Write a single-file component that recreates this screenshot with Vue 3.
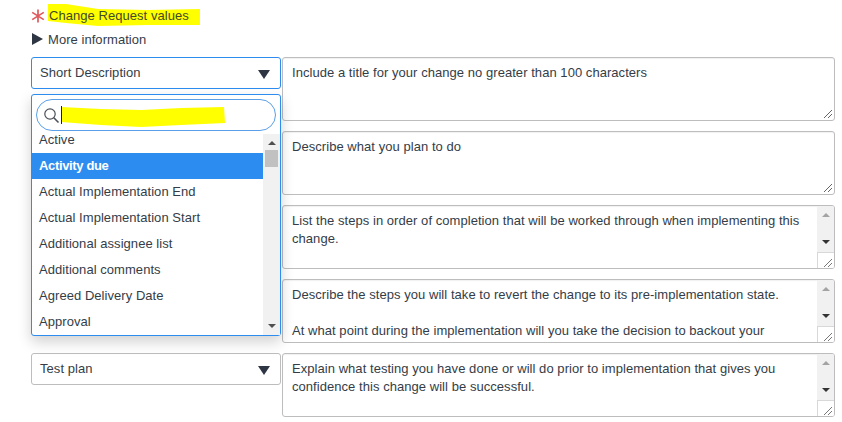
<script setup>
  const fieldOptions = [
    { name: 'Active' },
    { name: 'Activity due', selected: true },
    { name: 'Actual Implementation End' },
    { name: 'Actual Implementation Start' },
    { name: 'Additional assignee list' },
    { name: 'Additional comments' },
    { name: 'Agreed Delivery Date' },
    { name: 'Approval' },
  ];

  const rows = [
    { id: 1, label: 'Short Description', open: true, text: ['Include a title for your change no greater than 100 characters'] },
    { id: 2, text: ['Describe what you plan to do'] },
    { id: 3, scroll: true, text: ['List the steps in order of completion that will be worked through when implementing this change.'] },
    { id: 4, scroll: true, text: ['Describe the steps you will take to revert the change to its pre-implementation state.', '', 'At what point during the implementation will you take the decision to backout your change?'] },
    { id: 5, label: 'Test plan', scroll: true, text: ['Explain what testing you have done or will do prior to implementation that gives you confidence this change will be successful.'] },
  ];
</script>

<template>
  <div class="page">
    <div class="title">
      <svg class="star" width="14" height="14" viewBox="0 0 14 14">
        <path d="M7 0.5V13.5M1.2 3.4L12.8 10.6M12.8 3.4L1.2 10.6" stroke="#de5a5f" stroke-width="1.7" fill="none" />
      </svg>
      <span class="marked">
        <svg class="markedBg" width="153" height="22" viewBox="0 0 153 22">
          <path d="M0 0L18 0L50 5L100 6L152 5L152 21L100 21L50 22L18 19L0 17Z" fill="#ffff00" />
        </svg>
        <span class="markedText">Change Request values</span>
      </span>
    </div>

    <div class="more">
      <span class="moreArrow"></span>
      <span>More information</span>
    </div>

    <div class="rows">
      <div v-for="row in rows" :key="row.id" class="row">
        <div class="left">
          <template v-if="row.label">
            <div class="select" :class="{ selectOpen: row.open }">
              <span>{{ row.label }}</span>
              <span class="selectArrow"></span>
            </div>
          </template>

          <div v-if="row.open" class="dropdown">
            <div class="search">
              <svg class="glass" width="17" height="17" viewBox="0 0 17 17">
                <circle cx="7" cy="7" r="5.2" stroke="#4a5058" stroke-width="1.2" fill="none" />
                <path d="M10.8 10.8L15.5 15.5" stroke="#4a5058" stroke-width="1.6" fill="none" />
              </svg>
              <span class="caret"></span>
              <svg class="scribble" width="165" height="22" viewBox="0 0 165 22">
                <path d="M0 1L40 3L80 4L120 2L163 1L164 17L120 19L80 21L40 19L0 16Z" fill="#ffff00" />
              </svg>
            </div>
            <div class="listWrap">
              <div class="list">
                <div
                  v-for="option in fieldOptions"
                  :key="option.name"
                  class="option"
                  :class="{ optionSelected: option.selected }"
                >{{ option.name }}</div>
              </div>
              <div class="listBar">
                <span class="barUp"></span>
                <span class="barThumb"></span>
                <span class="barDown"></span>
              </div>
            </div>
          </div>
        </div>

        <div class="area" :class="{ areaScroll: row.scroll }">
          <div class="areaText">
            <div v-for="(line, i) in row.text" :key="i" class="areaLine">{{ line }}</div>
          </div>
          <div v-if="row.scroll" class="areaBar">
            <span class="barUp barUpOff"></span>
            <span class="barDown barDownDark"></span>
            <span class="spacer"></span>
            <span class="resizer">
              <svg width="16" height="16" viewBox="0 0 16 16">
                <path d="M6 14L14 6M10 14L14 10" stroke="#777" stroke-width="1" fill="none" />
              </svg>
            </span>
          </div>
          <svg v-else class="grip" width="10" height="10" viewBox="0 0 10 10">
            <path d="M1 9L9 1M5 9L9 5" stroke="#666" stroke-width="1" fill="none" />
          </svg>
        </div>
      </div>
    </div>
  </div>
</template>

<style scoped>
  .page {
    width: 842px;
    height: 422px;
    box-sizing: border-box;
    padding: 5px 7px 0 31px;
    font-family: "Liberation Sans", Arial, sans-serif;
    font-size: 13px;
    letter-spacing: 0.05px;
    color: #343d47;
    background: #fff;
    overflow: hidden;
  }

  .title {
    display: flex;
    align-items: center;
    height: 22px;
  }

  .star {
    margin: -1px 3px 0 0;
  }

  .marked {
    position: relative;
    display: block;
    width: 153px;
    height: 22px;
    line-height: 21px;
  }

  .markedBg {
    position: absolute;
    left: 0;
    top: 0;
    margin-top: -1px;
  }

  .markedText {
    position: relative;
    padding-left: 1px;
    color: #3f4a2a;
  }

  .more {
    display: flex;
    align-items: center;
    height: 22px;
    margin-top: 1px;
  }

  .moreArrow {
    width: 0;
    height: 0;
    margin: 0 5px 0 1px;
    border-left: 11px solid #2e3644;
    border-top: 6px solid transparent;
    border-bottom: 6px solid transparent;
  }

  .rows {
    display: flex;
    flex-direction: column;
    gap: 10px;
    margin-top: 7px;
  }

  .row {
    display: flex;
    gap: 1px;
    height: 64px;
  }

  .left {
    position: relative;
    width: 250px;
    flex: none;
  }

  .select {
    display: flex;
    align-items: center;
    justify-content: space-between;
    box-sizing: border-box;
    height: 32px;
    padding: 0 10px 2px 8px;
    border: 1px solid #bdbdbd;
    border-radius: 3px;
  }

  .selectOpen {
    border-color: #2d8cf0;
  }

  .selectArrow {
    width: 0;
    height: 0;
    margin-top: 5px;
    border-top: 9px solid #2e3644;
    border-left: 6px solid transparent;
    border-right: 6px solid transparent;
  }

  .dropdown {
    position: absolute;
    z-index: 2;
    top: 37px;
    left: 0;
    width: 250px;
    height: 242px;
    box-sizing: border-box;
    border: 1px solid #2d8cf0;
    border-radius: 3px;
    background: #fff;
    box-shadow: 0 6px 14px rgba(0, 0, 0, 0.18);
    display: flex;
    flex-direction: column;
  }

  .search {
    position: relative;
    display: flex;
    align-items: center;
    box-sizing: border-box;
    height: 32px;
    margin: 4px 4px 3px;
    padding-left: 6px;
    border: 1px solid #5a9fe8;
    border-radius: 16px;
  }

  .glass {
    flex: none;
  }

  .caret {
    width: 1px;
    height: 18px;
    margin-left: 1px;
    background: #222;
    position: relative;
    z-index: 1;
  }

  .scribble {
    position: absolute;
    left: 24px;
    top: 6px;
  }

  .listWrap {
    flex: 1;
    display: flex;
    min-height: 0;
  }

  .list {
    flex: 1;
    overflow: hidden;
  }

  .option {
    height: 26px;
    line-height: 25px;
    padding-left: 7px;
  }

  .option:first-child {
    height: 19px;
    line-height: 11px;
  }

  .optionSelected {
    background: #2d8cf0;
    color: #fff;
    font-weight: 700;
    letter-spacing: -0.35px;
  }

  .listBar {
    width: 17px;
    flex: none;
    display: flex;
    flex-direction: column;
    align-items: center;
    background: #f1f1f1;
  }

  .barUp {
    width: 0;
    height: 0;
    margin-top: 7px;
    border-bottom: 4px solid #505050;
    border-left: 4px solid transparent;
    border-right: 4px solid transparent;
  }

  .barThumb {
    width: 13px;
    height: 17px;
    margin-top: 5px;
    background: #c1c1c1;
  }

  .barDown {
    width: 0;
    height: 0;
    margin-top: auto;
    margin-bottom: 7px;
    border-top: 4px solid #505050;
    border-left: 4px solid transparent;
    border-right: 4px solid transparent;
  }

  .area {
    position: relative;
    flex: 1;
    display: flex;
    overflow: hidden;
    box-sizing: border-box;
    border: 1px solid #bdbdbd;
    border-radius: 3px;
    box-shadow: inset 0 1px 1px rgba(0, 0, 0, 0.06);
  }

  .areaText {
    flex: 1;
    min-width: 0;
    padding: 6px 9px 0;
    line-height: 18px;
    overflow: hidden;
  }

  .areaLine {
    min-height: 18px;
  }

  .areaBar {
    width: 17px;
    flex: none;
    display: flex;
    flex-direction: column;
    align-items: center;
    background: #f1f1f1;
  }

  .barUpOff {
    border-bottom-color: #a3a3a3;
    margin-top: 7px;
  }

  .barDownDark {
    margin-top: 23px;
    margin-bottom: 0;
    border-top-color: #333;
  }

  .spacer {
    flex: 1;
  }

  .resizer {
    width: 17px;
    height: 16px;
    background: #fff;
    border-top: 1px solid #d8d8d8;
    border-left: 1px solid #d8d8d8;
    box-sizing: border-box;
    display: flex;
  }

  .grip {
    position: absolute;
    right: 1px;
    bottom: 1px;
  }
</style>
